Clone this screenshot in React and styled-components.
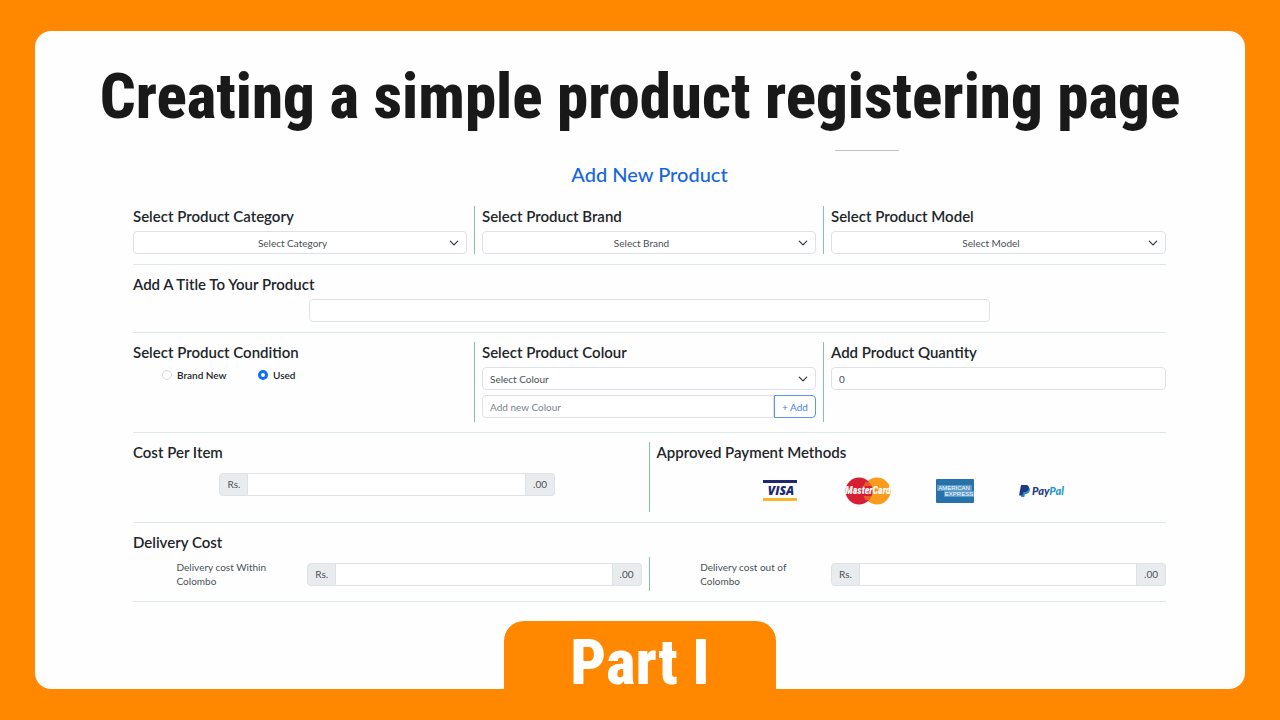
import React, { useState } from 'react';
import styled, { createGlobalStyle } from 'styled-components';

const GlobalStyle = createGlobalStyle`
  * {
    box-sizing: border-box;
  }

  body {
    margin: 0;
    background-color: #ff8800;
    color: #212529;
    font-family: Lato, 'Open Sans', sans-serif;
  }
`;

const Frame = styled.div`
  display: flex;
  min-height: 100vh;
  padding: 31px 35px;
`;

const Card = styled.main`
  display: flex;
  flex: 1;
  flex-direction: column;
  background-color: #fefefe;
  border-radius: 16px;
`;

const Title = styled.h1`
  margin: 26px 0 13px;
  color: #191919;
  font-family: 'Roboto Condensed', 'Liberation Sans Narrow', 'Liberation Sans', sans-serif;
  font-size: 63px;
  font-weight: 800;
  line-height: 80px;
  text-align: center;
`;

const PartLabel = styled.h2`
  align-self: center;
  width: 272px;
  height: 68px;
  margin: auto 0 0;
  padding-top: 8px;
  background-color: #ff8800;
  border-radius: 20px 20px 0 0;
  color: white;
  font-family: 'Roboto Condensed', 'Liberation Sans Narrow', 'Liberation Sans', sans-serif;
  font-size: 63px;
  font-weight: 800;
  line-height: 68px;
  text-align: center;
`;

const Form = styled.form`
  padding: 0 72px 0 91px;
`;

const Row = styled.div`
  display: grid;
  grid-template-columns: repeat(${(props) => props.$columns || 1}, 1fr);
`;

const Column = styled.section`
  min-width: 0;
  padding: 0 7px;
  border-right: ${(props) => (props.$divided ? '1px solid #84c3a3' : 'none')};
`;

const Divider = styled.hr`
  height: 1px;
  margin: 10px 7px 9px;
  background-color: #dce9e6;
  border: none;
`;

const TopRule = styled.hr`
  grid-column: 3;
  width: 64px;
  height: 1px;
  margin: 0 0 0 11px;
  background-color: #c4c4c4;
  border: none;
`;

const FormTitle = styled.h2`
  margin: 11px 0 19px;
  color: #1766dc;
  font-size: 20px;
  font-weight: 500;
  line-height: 25px;
  text-align: center;
`;

const Heading = styled.label`
  display: block;
  margin-bottom: 5px;
  font-size: 15px;
  font-weight: 600;
  line-height: 20px;
`;

const Input = styled.input`
  display: block;
  width: 100%;
  min-width: 0;
  height: 23px;
  padding: 0 7px;
  background-color: #ffffff;
  border: 1px solid #dee2e6;
  border-radius: 4px;
  color: #495057;
  font-family: inherit;
  font-size: 10px;

  &::placeholder {
    color: #7b8187;
    opacity: 1;
  }
`;

const SelectWrapper = styled.div`
  display: grid;
  align-items: center;

  & > * {
    grid-area: 1 / 1;
  }

  & > svg {
    justify-self: end;
    margin-right: 8px;
    pointer-events: none;
  }
`;

const SelectBox = styled.select`
  width: 100%;
  height: 23px;
  padding: 0 22px 0 7px;
  appearance: none;
  background-color: #ffffff;
  border: 1px solid #dee2e6;
  border-radius: 4px;
  color: #495057;
  font-family: inherit;
  font-size: 10px;
  text-align: ${(props) => (props.$centered ? 'center' : 'left')};
  text-align-last: ${(props) => (props.$centered ? 'center' : 'left')};
`;

const TitleField = styled.div`
  width: 66%;
  margin: 0 auto;
`;

const RadioRow = styled.div`
  display: grid;
  grid-template-columns: 96px auto;
  padding-left: 29px;
`;

const RadioLabel = styled.label`
  display: flex;
  align-items: center;
  gap: 5px;
  font-size: 10px;
  font-weight: 600;
  line-height: 16px;
`;

const Radio = styled.input`
  appearance: none;
  width: 10px;
  height: 10px;
  margin: 0;
  background-color: #ffffff;
  border: 1px solid #d5d9dd;
  border-radius: 50%;

  &:checked {
    border: 3px solid #0d6efd;
  }
`;

const InputGroup = styled.div`
  display: flex;

  & > :not(:first-child) {
    border-left: none;
    border-top-left-radius: 0;
    border-bottom-left-radius: 0;
  }

  & > :not(:last-child) {
    border-top-right-radius: 0;
    border-bottom-right-radius: 0;
  }
`;

const ColourGroup = styled(InputGroup)`
  margin: 5px 0 4px;
`;

const AddButton = styled.button`
  flex: none;
  width: 42px;
  height: 23px;
  padding: 0;
  background-color: #ffffff;
  border: 1px solid #5b96f2;
  border-radius: 4px;
  color: #3d7fee;
  font-family: inherit;
  font-size: 10px;

  ${ColourGroup} > && {
    border-left: 1px solid #5b96f2;
  }
`;

const Addon = styled.span`
  flex: none;
  width: 29px;
  height: 23px;
  background-color: #e9ecef;
  border: 1px solid #dee2e6;
  border-radius: 4px;
  color: #495057;
  font-size: 10px;
  line-height: 21px;
  text-align: center;
`;

const CostField = styled.div`
  width: 66%;
  margin: 11px auto 16px;
`;

const Logos = styled.div`
  display: grid;
  grid-template-columns: repeat(6, 1fr);
  align-items: center;
  justify-items: center;
  height: 36px;
  margin: 11px -7px 0;

  & > :first-child {
    grid-column: 2;
  }
`;

const DeliveryHeading = styled.h3`
  margin: 0 7px 5px;
  font-size: 15px;
  font-weight: 600;
  line-height: 20px;
`;

const DeliveryField = styled.div`
  display: grid;
  grid-template-columns: 1fr 3fr 8fr;
  align-items: center;
  height: 34px;
  margin: 0 -7px;

  & > * {
    margin: 0 7px;
  }
`;

const DeliveryLabel = styled.label`
  grid-column: 2;
  color: #495057;
  font-size: 10px;
  line-height: 14px;
`;

const Chevron = () => (
  <svg width="10" height="10" viewBox="0 0 16 16" aria-hidden="true">
    <path d="M2 5l6 6 6-6" fill="none" stroke="#343a40" strokeWidth="2" strokeLinecap="round" strokeLinejoin="round" />
  </svg>
);

const Select = ({ id, label, centered }) => (
  <SelectWrapper>
    <SelectBox id={id} $centered={centered}>
      <option>{label}</option>
    </SelectBox>
    <Chevron />
  </SelectWrapper>
);

const MoneyInput = ({ id }) => (
  <InputGroup>
    <Addon>Rs.</Addon>
    <Input id={id} type="text" />
    <Addon>.00</Addon>
  </InputGroup>
);

const VisaLogo = () => (
  <svg width="34" height="22" viewBox="0 0 34 22" role="img" aria-label="Visa">
    <rect width="34" height="22" fill="#ffffff" />
    <rect width="34" height="3" fill="#20266f" />
    <rect y="18" width="34" height="3" fill="#f8b42d" />
    <text x="18" y="15" textAnchor="middle" fill="#20266f" fontFamily="Open Sans, sans-serif" fontSize="12" fontWeight="800" fontStyle="italic">VISA</text>
  </svg>
);

const MasterCardLogo = () => (
  <svg width="46" height="28" viewBox="0 0 46 28" role="img" aria-label="MasterCard">
    <circle cx="32" cy="14" r="13.5" fill="#f99b1c" />
    <circle cx="14" cy="14" r="13.5" fill="#d61f33" />
    <path d="M20 6h7M19 8h8M19 20h8M20 22h7" stroke="#f99b1c" strokeWidth="1" />
    <text x="23" y="17" textAnchor="middle" fill="#ffffff" fontFamily="Roboto Condensed, Liberation Sans, sans-serif" fontSize="10" fontWeight="800" fontStyle="italic">MasterCard</text>
  </svg>
);

const AmexLogo = () => (
  <svg width="38" height="24" viewBox="0 0 38 24" role="img" aria-label="American Express">
    <rect width="38" height="24" rx="1" fill="#2872ab" />
    <path d="M1 6h35v6h2v6H8v-6H1z" fill="#5c9bc9" />
    <text x="18" y="11" textAnchor="middle" fill="#ffffff" fontFamily="Liberation Sans, sans-serif" fontSize="6">AMERICAN</text>
    <text x="23" y="17" textAnchor="middle" fill="#ffffff" fontFamily="Liberation Sans, sans-serif" fontSize="6">EXPRESS</text>
  </svg>
);

const PayPalLogo = () => (
  <svg width="46" height="14" viewBox="0 0 46 14" role="img" aria-label="PayPal">
    <path d="M4 3h4c3 0 3.500 2 2.500 4.500C9.500 9.500 8 10 6 10l-.8 3H2z" fill="#2790c3" />
    <path d="M2 1h4.500C9.500 1 10.500 3 9.500 5.500 8.700 7.500 7 8 4.500 8l-1 3.500H0z" fill="#1f3a80" />
    <text x="13" y="11" fontFamily="Lato, sans-serif" fontSize="11" fontWeight="900" fontStyle="italic"><tspan fill="#253b80">Pay</tspan><tspan fill="#2598cf">Pal</tspan></text>
  </svg>
);

const App = () => {
  const [condition, setCondition] = useState('used');
  const [quantity, setQuantity] = useState('0');

  return (
    <>
      <GlobalStyle />
      <Frame>
        <Card>
          <Title>Creating a simple product registering page</Title>

          <Form onSubmit={(e) => e.preventDefault()}>
            <Row $columns={3}>
              <TopRule />
            </Row>
            <FormTitle>Add New Product</FormTitle>

            {/* Category, brand and model */}
            <Row $columns={3}>
              <Column $divided>
                <Heading htmlFor="category">Select Product Category</Heading>
                <Select id="category" label="Select Category" centered />
              </Column>
              <Column $divided>
                <Heading htmlFor="brand">Select Product Brand</Heading>
                <Select id="brand" label="Select Brand" centered />
              </Column>
              <Column>
                <Heading htmlFor="model">Select Product Model</Heading>
                <Select id="model" label="Select Model" centered />
              </Column>
            </Row>
            <Divider />

            <Column>
              <Heading htmlFor="title">Add A Title To Your Product</Heading>
              <TitleField>
                <Input id="title" type="text" />
              </TitleField>
            </Column>
            <Divider />

            {/* Condition, colour and quantity */}
            <Row $columns={3}>
              <Column $divided>
                <Heading as="div" id="condition">Select Product Condition</Heading>
                <RadioRow role="radiogroup" aria-labelledby="condition">
                  <RadioLabel>
                    <Radio
                      type="radio"
                      name="condition"
                      checked={condition === 'new'}
                      onChange={() => setCondition('new')}
                    />
                    Brand New
                  </RadioLabel>
                  <RadioLabel>
                    <Radio
                      type="radio"
                      name="condition"
                      checked={condition === 'used'}
                      onChange={() => setCondition('used')}
                    />
                    Used
                  </RadioLabel>
                </RadioRow>
              </Column>
              <Column $divided>
                <Heading htmlFor="colour">Select Product Colour</Heading>
                <Select id="colour" label="Select Colour" />
                <ColourGroup>
                  <Input type="text" placeholder="Add new Colour" aria-label="Add new Colour" />
                  <AddButton type="button">+ Add</AddButton>
                </ColourGroup>
              </Column>
              <Column>
                <Heading htmlFor="quantity">Add Product Quantity</Heading>
                <Input
                  id="quantity"
                  type="text"
                  value={quantity}
                  onChange={(e) => setQuantity(e.target.value)}
                />
              </Column>
            </Row>
            <Divider />

            {/* Cost and payment methods */}
            <Row $columns={2}>
              <Column $divided>
                <Heading htmlFor="cost">Cost Per Item</Heading>
                <CostField>
                  <MoneyInput id="cost" />
                </CostField>
              </Column>
              <Column>
                <Heading as="div">Approved Payment Methods</Heading>
                <Logos>
                  <VisaLogo />
                  <MasterCardLogo />
                  <AmexLogo />
                  <PayPalLogo />
                </Logos>
              </Column>
            </Row>
            <Divider />

            {/* Delivery */}
            <DeliveryHeading>Delivery Cost</DeliveryHeading>
            <Row $columns={2}>
              <Column $divided>
                <DeliveryField>
                  <DeliveryLabel htmlFor="delivery-in">Delivery cost Within Colombo</DeliveryLabel>
                  <MoneyInput id="delivery-in" />
                </DeliveryField>
              </Column>
              <Column>
                <DeliveryField>
                  <DeliveryLabel htmlFor="delivery-out">Delivery cost out of Colombo</DeliveryLabel>
                  <MoneyInput id="delivery-out" />
                </DeliveryField>
              </Column>
            </Row>
            <Divider />
          </Form>

          <PartLabel>Part I</PartLabel>
        </Card>
      </Frame>
    </>
  );
};

export default App;
